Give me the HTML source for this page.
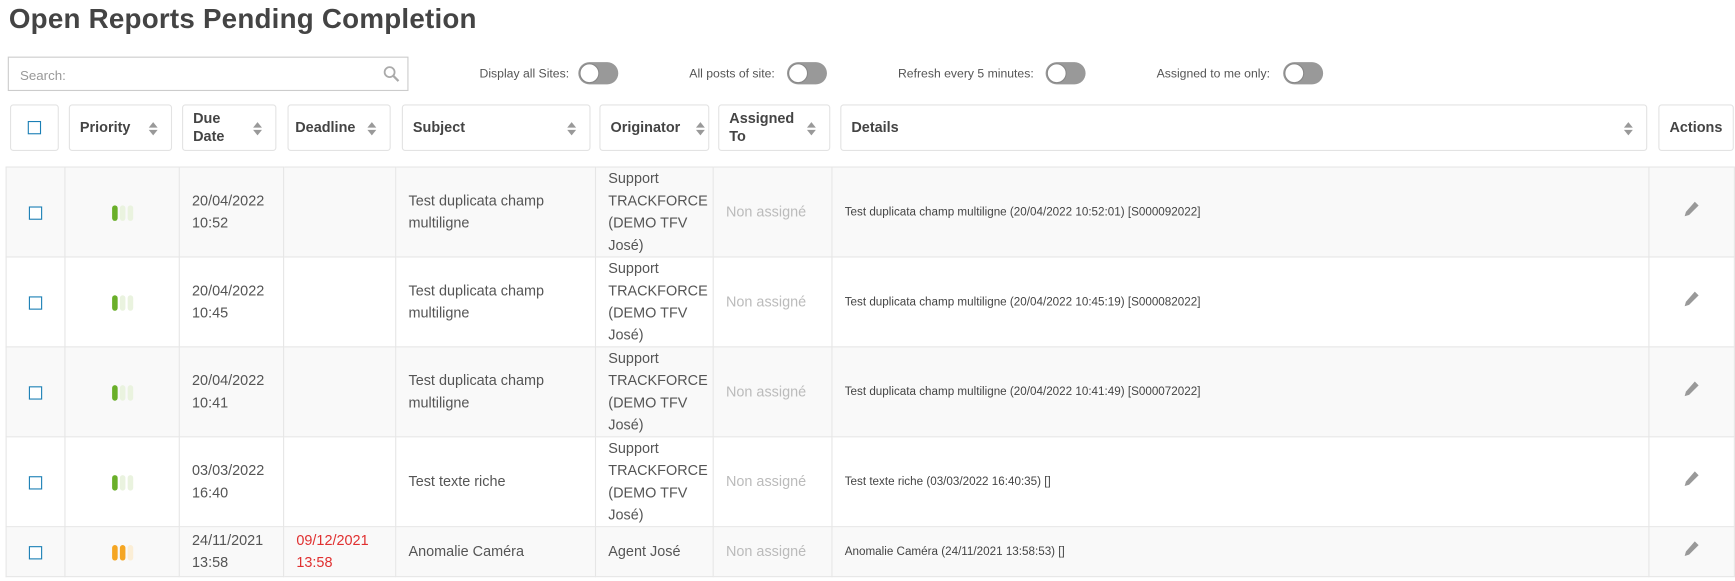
<!DOCTYPE html>
<html><head><meta charset="utf-8"><style>
html,body{margin:0;padding:0;background:#fff;width:1735px;height:581px;overflow:hidden}
#w{position:absolute;left:0;top:0;width:1563px;height:523px;transform:scale(1.11);transform-origin:0 0;font-family:"Liberation Sans",sans-serif;color:#555}
h1{position:absolute;left:8px;top:3px;margin:0;font-size:25px;font-weight:bold;color:#444;letter-spacing:0.2px}
.search{position:absolute;left:7px;top:51px;width:361px;height:31px;border:1px solid #ccc;box-sizing:border-box}
.search span{position:absolute;left:10px;top:9px;font-size:12px;color:#999}
.lab{position:absolute;top:61px;font-size:11px;color:#555}
.tg{position:absolute;top:56px;width:36px;height:20px;border-radius:10px;background:#999;box-sizing:border-box}
.tg::after{content:"";position:absolute;left:1px;top:1px;width:18px;height:18px;border-radius:50%;background:#fff;box-sizing:border-box;border:1px solid #888}
.h{position:absolute;top:94px;height:42px;border:1px solid #e3e3e3;border-radius:3px;box-sizing:border-box;font-size:13px;font-weight:bold;color:#444;padding-left:9px;display:flex;align-items:center;line-height:16px}
.s{position:absolute;right:12px;top:15px;width:8px;height:12px}
.s::before{content:"";position:absolute;left:0;top:0;border:4px solid transparent;border-bottom:5px solid #999;border-top:0}
.s::after{content:"";position:absolute;left:0;top:7px;border:4px solid transparent;border-top:5px solid #999;border-bottom:0}
.cb{display:inline-block;width:10px;height:10px;border:1.5px solid #1a7fb5;box-sizing:content-box;background:#fff;vertical-align:middle}
table{position:absolute;left:5px;top:150px;border-collapse:collapse;font-size:13px;table-layout:fixed;width:1557px}
td{border:1px solid #e6e6e6;padding:0 0 0 11px;vertical-align:middle;line-height:20px;color:#555;overflow:hidden}
tr.a td{background:#f9f9f9}
td.c{text-align:center;padding:0}
.na{color:#bbb}
.dt{font-size:10.5px;color:#444}
.p{display:inline-block;width:5px;height:14px;border-radius:2.5px;margin:0 1px;vertical-align:middle}
.g{background:#6aaf2a}.l{background:#eaf3df}.o{background:#f5a623}.lo{background:#fbeed6}
.red{color:#e03030}
</style></head><body><div id="w">
<h1>Open Reports Pending Completion</h1>
<div class="search"><span>Search:</span>
<svg style="position:absolute;right:7px;top:7px" width="15" height="15" viewBox="0 0 15 15"><circle cx="6" cy="6" r="4.5" fill="none" stroke="#aaa" stroke-width="1.6"/><path d="M9.5 9.5L14 14" stroke="#aaa" stroke-width="2"/></svg></div>
<div class="lab" style="left:432px">Display all Sites:</div><div class="tg" style="left:521px"></div>
<div class="lab" style="left:621px">All posts of site:</div><div class="tg" style="left:709px"></div>
<div class="lab" style="left:809px">Refresh every 5 minutes:</div><div class="tg" style="left:942px"></div>
<div class="lab" style="left:1042px">Assigned to me only:</div><div class="tg" style="left:1156px"></div>

<div class="h" style="left:9px;width:44px;justify-content:center;padding:0"><span class="cb"></span></div>
<div class="h" style="left:62px;width:93px">Priority<span class="s"></span></div>
<div class="h" style="left:164px;width:85px">Due<br>Date<span class="s"></span></div>
<div class="h" style="left:259px;width:93px;padding-left:6px">Deadline<span class="s"></span></div>
<div class="h" style="left:362px;width:170px">Subject<span class="s"></span></div>
<div class="h" style="left:540px;width:99px">Originator<span class="s" style="right:3px"></span></div>
<div class="h" style="left:647px;width:101px">Assigned<br>To<span class="s"></span></div>
<div class="h" style="left:757px;width:727px">Details<span class="s"></span></div>
<div class="h" style="left:1494px;width:68px">Actions</div>

<table>
<colgroup><col style="width:53px"><col style="width:103px"><col style="width:94px"><col style="width:101px"><col style="width:180px"><col style="width:106px"><col style="width:107px"><col style="width:736px"><col style="width:77px"></colgroup>
<tr class="a" style="height:81px"><td class="c"><span class="cb"></span></td><td class="c"><span class="p g"></span><span class="p l"></span><span class="p l"></span></td><td>20/04/2022<br>10:52</td><td></td><td>Test duplicata champ<br>multiligne</td><td>Support TRACKFORCE (DEMO TFV José)</td><td class="na">Non assigné</td><td class="dt">Test duplicata champ multiligne (20/04/2022 10:52:01) [S000092022]</td><td class="c"><svg width="16" height="16" viewBox="0 0 14 14"><path d="M9.5 1.5l3 3-7.5 7.5-3.5 1 1-3.5z" fill="#999"/></svg></td></tr>
<tr style="height:81px"><td class="c"><span class="cb"></span></td><td class="c"><span class="p g"></span><span class="p l"></span><span class="p l"></span></td><td>20/04/2022<br>10:45</td><td></td><td>Test duplicata champ<br>multiligne</td><td>Support TRACKFORCE (DEMO TFV José)</td><td class="na">Non assigné</td><td class="dt">Test duplicata champ multiligne (20/04/2022 10:45:19) [S000082022]</td><td class="c"><svg width="16" height="16" viewBox="0 0 14 14"><path d="M9.5 1.5l3 3-7.5 7.5-3.5 1 1-3.5z" fill="#999"/></svg></td></tr>
<tr class="a" style="height:81px"><td class="c"><span class="cb"></span></td><td class="c"><span class="p g"></span><span class="p l"></span><span class="p l"></span></td><td>20/04/2022<br>10:41</td><td></td><td>Test duplicata champ<br>multiligne</td><td>Support TRACKFORCE (DEMO TFV José)</td><td class="na">Non assigné</td><td class="dt">Test duplicata champ multiligne (20/04/2022 10:41:49) [S000072022]</td><td class="c"><svg width="16" height="16" viewBox="0 0 14 14"><path d="M9.5 1.5l3 3-7.5 7.5-3.5 1 1-3.5z" fill="#999"/></svg></td></tr>
<tr style="height:81px"><td class="c"><span class="cb"></span></td><td class="c"><span class="p g"></span><span class="p l"></span><span class="p l"></span></td><td>03/03/2022<br>16:40</td><td></td><td>Test texte riche</td><td>Support TRACKFORCE (DEMO TFV José)</td><td class="na">Non assigné</td><td class="dt">Test texte riche (03/03/2022 16:40:35) []</td><td class="c"><svg width="16" height="16" viewBox="0 0 14 14"><path d="M9.5 1.5l3 3-7.5 7.5-3.5 1 1-3.5z" fill="#999"/></svg></td></tr>
<tr class="a" style="height:45px"><td class="c"><span class="cb"></span></td><td class="c"><span class="p o"></span><span class="p o"></span><span class="p lo"></span></td><td>24/11/2021<br>13:58</td><td class="red">09/12/2021<br>13:58</td><td>Anomalie Caméra</td><td>Agent José</td><td class="na">Non assigné</td><td class="dt">Anomalie Caméra (24/11/2021 13:58:53) []</td><td class="c"><svg width="16" height="16" viewBox="0 0 14 14"><path d="M9.5 1.5l3 3-7.5 7.5-3.5 1 1-3.5z" fill="#999"/></svg></td></tr>
</table>
</div>
</body></html>
